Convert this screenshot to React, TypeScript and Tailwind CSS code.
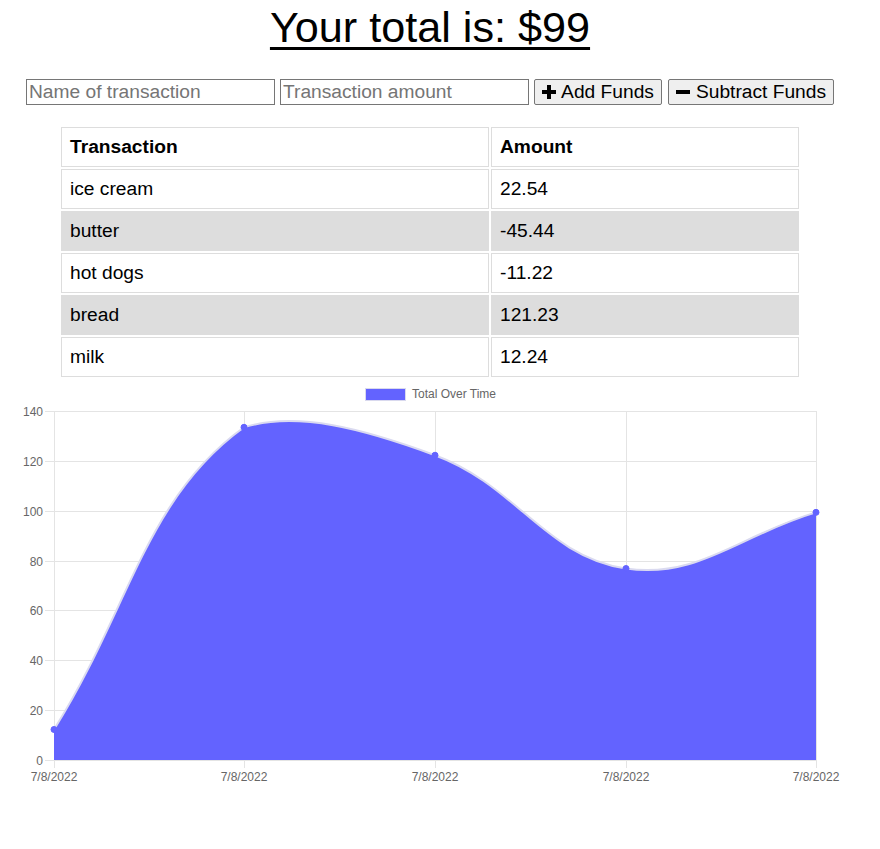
import React from "react";

type P = { x: number; y: number };

const X0 = 54;
const X1 = 816;
const YTOP = 411;
const YBOT = 760;
const MAXV = 140;
const OFF = 380;

const values = [12.24, 133.47, 122.25, 76.81, 99.35];
const xs = [54, 244, 435, 626, 816];

function yOf(v: number) {
  return YBOT - (v / MAXV) * (YBOT - YTOP) - OFF;
}

function buildPath(pts: P[], t = 0.4) {
  const cps: { prev: P; next: P }[] = pts.map((cur, i) => {
    const prev = i === 0 ? cur : pts[i - 1];
    const next = i === pts.length - 1 ? cur : pts[i + 1];
    const d01 = Math.hypot(cur.x - prev.x, cur.y - prev.y);
    const d12 = Math.hypot(next.x - cur.x, next.y - cur.y);
    let s01 = d01 / (d01 + d12);
    let s12 = d12 / (d01 + d12);
    if (isNaN(s01)) s01 = 0;
    if (isNaN(s12)) s12 = 0;
    const fa = t * s01;
    const fb = t * s12;
    const clamp = (p: P): P => ({
      x: Math.max(X0, Math.min(X1, p.x)),
      y: Math.max(YTOP - OFF, Math.min(YBOT - OFF, p.y)),
    });
    return {
      prev: clamp({ x: cur.x - fa * (next.x - prev.x), y: cur.y - fa * (next.y - prev.y) }),
      next: clamp({ x: cur.x + fb * (next.x - prev.x), y: cur.y + fb * (next.y - prev.y) }),
    };
  });
  let d = `M ${pts[0].x} ${pts[0].y}`;
  for (let i = 1; i < pts.length; i++) {
    const a = cps[i - 1].next;
    const b = cps[i].prev;
    d += ` C ${a.x} ${a.y} ${b.x} ${b.y} ${pts[i].x} ${pts[i].y}`;
  }
  return d;
}

function Chart() {
  const pts: P[] = values.map((v, i) => ({ x: xs[i], y: yOf(v) }));
  const line = buildPath(pts);
  const area = `${line} L ${X1} ${YBOT - OFF} L ${X0} ${YBOT - OFF} Z`;
  const yTicks = [0, 20, 40, 60, 80, 100, 120, 140];
  const grid = "#e4e4e4";
  return (
    <svg width={880} height={420} className="block" style={{ fontFamily: '"Liberation Sans", Arial, sans-serif' }}>
      {/* legend */}
      <rect x={365.5} y={388.5 - OFF} width={40} height={12} fill="#6363ff" stroke="#d9d9ee" strokeWidth={1} />
      <text x={412} y={398 - OFF} fontSize={12} fill="#666">Total Over Time</text>
      {/* horizontal grid */}
      {yTicks.map((v) => {
        const y = Math.round(yOf(v)) + 0.5;
        return (
          <g key={v}>
            <line x1={45} x2={X1} y1={y} y2={y} stroke={grid} strokeWidth={1} />
            <text x={43} y={y + 4} fontSize={12} fill="#666" textAnchor="end">{v}</text>
          </g>
        );
      })}
      {/* vertical grid */}
      {xs.map((x, i) => (
        <g key={i}>
          <line x1={x + 0.5} x2={x + 0.5} y1={YTOP - OFF} y2={YBOT - OFF + 8} stroke={grid} strokeWidth={1} />
          <text x={x} y={781 - OFF} fontSize={12} fill="#666" textAnchor="middle">7/8/2022</text>
        </g>
      ))}
      {/* area */}
      <path d={area} fill="#6363ff" />
      <path d={line} fill="none" stroke="#dadaf0" strokeWidth={2} />
      {pts.map((p, i) => (
        <circle key={i} cx={p.x} cy={p.y} r={3} fill="#6363ff" stroke="#6363ff" strokeWidth={1} />
      ))}
    </svg>
  );
}

const rows = [
  ["ice cream", "22.54"],
  ["butter", "-45.44"],
  ["hot dogs", "-11.22"],
  ["bread", "121.23"],
  ["milk", "12.24"],
];

export default function App() {
  return (
    <div className="w-[860px] bg-white text-black" style={{ fontFamily: '"Liberation Sans", Arial, sans-serif' }}>
      <h1 className="mt-[3px] text-center text-[43.2px] font-normal leading-[1.15] underline decoration-[3px] underline-offset-[5px]">
        Your total is: $99
      </h1>
      <div className="mt-[26px] flex h-[26px] items-stretch pl-[26px] text-[19.2px]">
        <input
          className="h-[26px] w-[249px] border border-[#767676] px-[2px] text-[19.2px] leading-[22px] outline-none placeholder:text-[#757575]"
          placeholder="Name of transaction"
        />
        <input
          className="ml-[5px] h-[26px] w-[249px] border border-[#767676] px-[2px] text-[19.2px] leading-[22px] outline-none placeholder:text-[#757575]"
          placeholder="Transaction amount"
        />
        <button className="ml-[5px] flex h-[26px] w-[128px] items-center justify-center gap-[5px] rounded-[2px] border border-[#767676] bg-[#efefef] text-[19.2px] leading-[22px]">
          <svg width="14" height="14" viewBox="0 0 14 14">
            <rect x="5" y="0" width="4" height="14" fill="#000" />
            <rect x="0" y="5" width="14" height="4" fill="#000" />
          </svg>
          <span>Add Funds</span>
        </button>
        <button className="ml-[6px] flex h-[26px] w-[166px] items-center justify-center gap-[6px] rounded-[2px] border border-[#767676] bg-[#efefef] text-[19.2px] leading-[22px]">
          <svg width="14" height="14" viewBox="0 0 14 14">
            <rect x="0" y="5" width="14" height="4" fill="#000" />
          </svg>
          <span>Subtract Funds</span>
        </button>
      </div>
      <table className="ml-[59px] mt-[20px] w-[742px] table-fixed border-separate border-spacing-[2px] text-left text-[19.2px]">
        <thead>
          <tr>
            <th className="h-[40px] w-[428px] border border-[#dddddd] px-[8px] py-0 font-bold leading-[22px]">Transaction</th>
            <th className="h-[40px] w-[308px] border border-[#dddddd] px-[8px] py-0 font-bold leading-[22px]">Amount</th>
          </tr>
        </thead>
        <tbody>
          {rows.map((r, i) => (
            <tr key={i} className={i % 2 === 1 ? "bg-[#dddddd]" : "bg-white"}>
              <td className="h-[40px] border border-[#dddddd] px-[8px] py-0 leading-[22px]">{r[0]}</td>
              <td className="h-[40px] border border-[#dddddd] px-[8px] py-0 leading-[22px]">{r[1]}</td>
            </tr>
          ))}
        </tbody>
      </table>
      <div className="mt-[1px]">
        <Chart />
      </div>
    </div>
  );
}
